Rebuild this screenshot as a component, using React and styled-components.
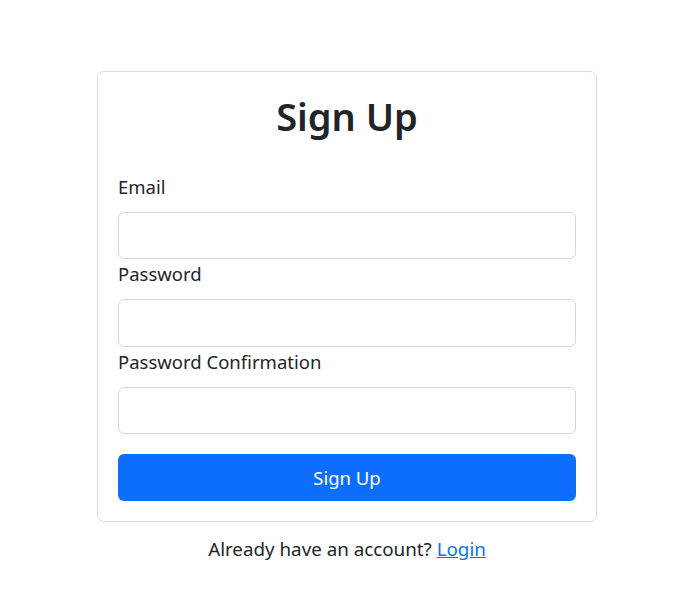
import React from "react";
import styled, { createGlobalStyle } from "styled-components";

const Global = createGlobalStyle`
  html, body { margin: 0; padding: 0; background: #fff; }
  body {
    font-family: "Segoe UI", "Noto Sans", "Open Sans", sans-serif;
    color: #212529;
  }
  * { box-sizing: border-box; }
`;

const Page = styled.div`
  width: 694px;
  padding-top: 71px;
  display: flex;
  flex-direction: column;
  align-items: center;
`;

const Card = styled.form`
  width: 500px;
  border: 1px solid #dcdcdd;
  border-radius: 7px;
  padding: 20px;
  display: flex;
  flex-direction: column;
`;

const Title = styled.h2`
  margin: 0 0 31px;
  text-align: center;
  font-size: 38px;
  font-weight: 600;
  line-height: 49px;
  color: #212529;
`;

const Field = styled.div`
  display: flex;
  flex-direction: column;
`;

const Label = styled.label`
  font-size: 18.5px;
  line-height: 30px;
  margin-bottom: 10px;
  color: #212529;
`;

const Input = styled.input`
  height: 47.4px;
  border: 1px solid #d4d7da;
  border-radius: 6px;
  padding: 0 15px;
  font: inherit;
  font-size: 19px;
  outline: none;
`;

const Button = styled.button`
  margin-top: 19.5px;
  height: 47.5px;
  border: none;
  border-radius: 6px;
  background: #0d6efd;
  color: #fff;
  font-family: inherit;
  font-size: 18.5px;
  cursor: pointer;
`;

const Footer = styled.p`
  margin: 12px 0 0;
  font-size: 18.8px;
  line-height: 30px;
  color: #212529;
`;

const Link = styled.a`
  color: #0d6efd;
  text-decoration: underline;
`;

export default function App() {
  return (
    <>
      <Global />
      <Page>
        <Card onSubmit={(e) => e.preventDefault()}>
          <Title>Sign Up</Title>
          <Field>
            <Label>Email</Label>
            <Input type="email" />
          </Field>
          <Field>
            <Label>Password</Label>
            <Input type="password" />
          </Field>
          <Field>
            <Label>Password Confirmation</Label>
            <Input type="password" />
          </Field>
          <Button type="submit">Sign Up</Button>
        </Card>
        <Footer>
          Already have an account? <Link href="#">Login</Link>
        </Footer>
      </Page>
    </>
  );
}
